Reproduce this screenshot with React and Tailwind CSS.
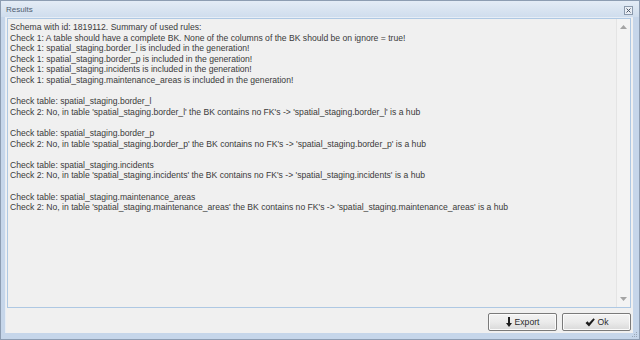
const lines = [
  "Schema with id: 1819112. Summary of used rules:",
  "Check 1: A table should have a complete BK. None of the columns of the BK should be on ignore = true!",
  "Check 1: spatial_staging.border_l is included in the generation!",
  "Check 1: spatial_staging.border_p is included in the generation!",
  "Check 1: spatial_staging.incidents is included in the generation!",
  "Check 1: spatial_staging.maintenance_areas is included in the generation!",
  "",
  "Check table: spatial_staging.border_l",
  "Check 2: No, in table 'spatial_staging.border_l' the BK contains no FK's -> 'spatial_staging.border_l' is a hub",
  "",
  "Check table: spatial_staging.border_p",
  "Check 2: No, in table 'spatial_staging.border_p' the BK contains no FK's -> 'spatial_staging.border_p' is a hub",
  "",
  "Check table: spatial_staging.incidents",
  "Check 2: No, in table 'spatial_staging.incidents' the BK contains no FK's -> 'spatial_staging.incidents' is a hub",
  "",
  "Check table: spatial_staging.maintenance_areas",
  "Check 2: No, in table 'spatial_staging.maintenance_areas' the BK contains no FK's -> 'spatial_staging.maintenance_areas' is a hub",
];

function Button({ icon, label }) {
  return (
    <button className="w-[69px] h-[18px] flex items-center justify-center gap-[3px] rounded-[2px] border border-[#7a7a7a] bg-gradient-to-b from-[#f3f3f3] via-[#ebebeb] to-[#d9d9d9] text-[8.6px] text-[#2a2a2a] shadow-[inset_0_0_0_1px_#fbfbfb]">
      {icon}
      <span>{label}</span>
    </button>
  );
}

export default function App() {
  return (
    <div className="w-[640px] h-[340px] flex flex-col bg-[#c6d6ea] border-t border-l border-r border-b border-[#8d9db2] font-['Liberation_Sans',Arial,sans-serif]">
      {/* title bar */}
      <div className="h-[16px] flex items-center justify-between pl-[5px] pr-[6px] bg-gradient-to-b from-[#e4ecf6] to-[#cfdded]">
        <span className="text-[8px] text-[#4e5d70] mt-[2px]">Results</span>
        <div className="w-[9px] h-[9px] mt-[3px] border border-[#8a99ac] bg-[#e9eef5] flex items-center justify-center">
          <svg width="5" height="5" viewBox="0 0 5 5">
            <path d="M0.5 0.5 L4.5 4.5 M4.5 0.5 L0.5 4.5" stroke="#4a5566" strokeWidth="1" />
          </svg>
        </div>
      </div>

      {/* body */}
      <div className="flex-1 ml-[4px] mr-[6px] mb-[6px] bg-[#f0f0f0] border-l border-t border-[#e6edf6] flex flex-col">
        <div className="ml-[1px] w-[624px] h-[290px] border border-[#aec8e3] flex">
          <div className="flex-1 pl-[2px] pt-[3px] text-[8.6px] leading-[10.6px] text-[#3a3a3a] whitespace-pre">
            {lines.map((l, i) => (
              <div key={i} className="h-[10.6px]">{l}</div>
            ))}
          </div>
          <div className="w-[14px] bg-[#f3f3f3] border-l border-[#e4e4e4] flex flex-col items-center justify-between py-[6px]">
            <svg width="7" height="4" viewBox="0 0 7 4">
              <path d="M0 4 L3.5 0 L7 4 Z" fill="#a4a4a4" />
            </svg>
            <svg width="7" height="4" viewBox="0 0 7 4">
              <path d="M0 0 L3.5 4 L7 0 Z" fill="#a4a4a4" />
            </svg>
          </div>
        </div>

        <div className="flex-1 flex justify-end items-start pt-[5px] pr-[2px] gap-[5px] relative">
          <Button
            label="Export"
            icon={
              <svg width="6" height="10" viewBox="0 0 6 10">
                <path d="M2 0 H4 V6 H6 L3 10 L0 6 H2 Z" fill="#1e1e1e" />
              </svg>
            }
          />
          <Button
            label="Ok"
            icon={
              <svg width="10" height="9" viewBox="0 0 10 9">
                <path d="M0.5 5 L2.5 3.2 L4 5 L8.5 0.3 L9.8 1.6 L4 8.5 Z" fill="#1e1e1e" />
              </svg>
            }
          />
          <svg className="absolute right-[-5px] bottom-[-5px]" width="6" height="6" viewBox="0 0 6 6">
            <rect x="4" y="0" width="1" height="1" fill="#9aa8b8" />
            <rect x="2" y="2" width="1" height="1" fill="#9aa8b8" />
            <rect x="4" y="2" width="1" height="1" fill="#9aa8b8" />
            <rect x="0" y="4" width="1" height="1" fill="#9aa8b8" />
            <rect x="2" y="4" width="1" height="1" fill="#9aa8b8" />
            <rect x="4" y="4" width="1" height="1" fill="#9aa8b8" />
          </svg>
        </div>
      </div>
    </div>
  );
}
